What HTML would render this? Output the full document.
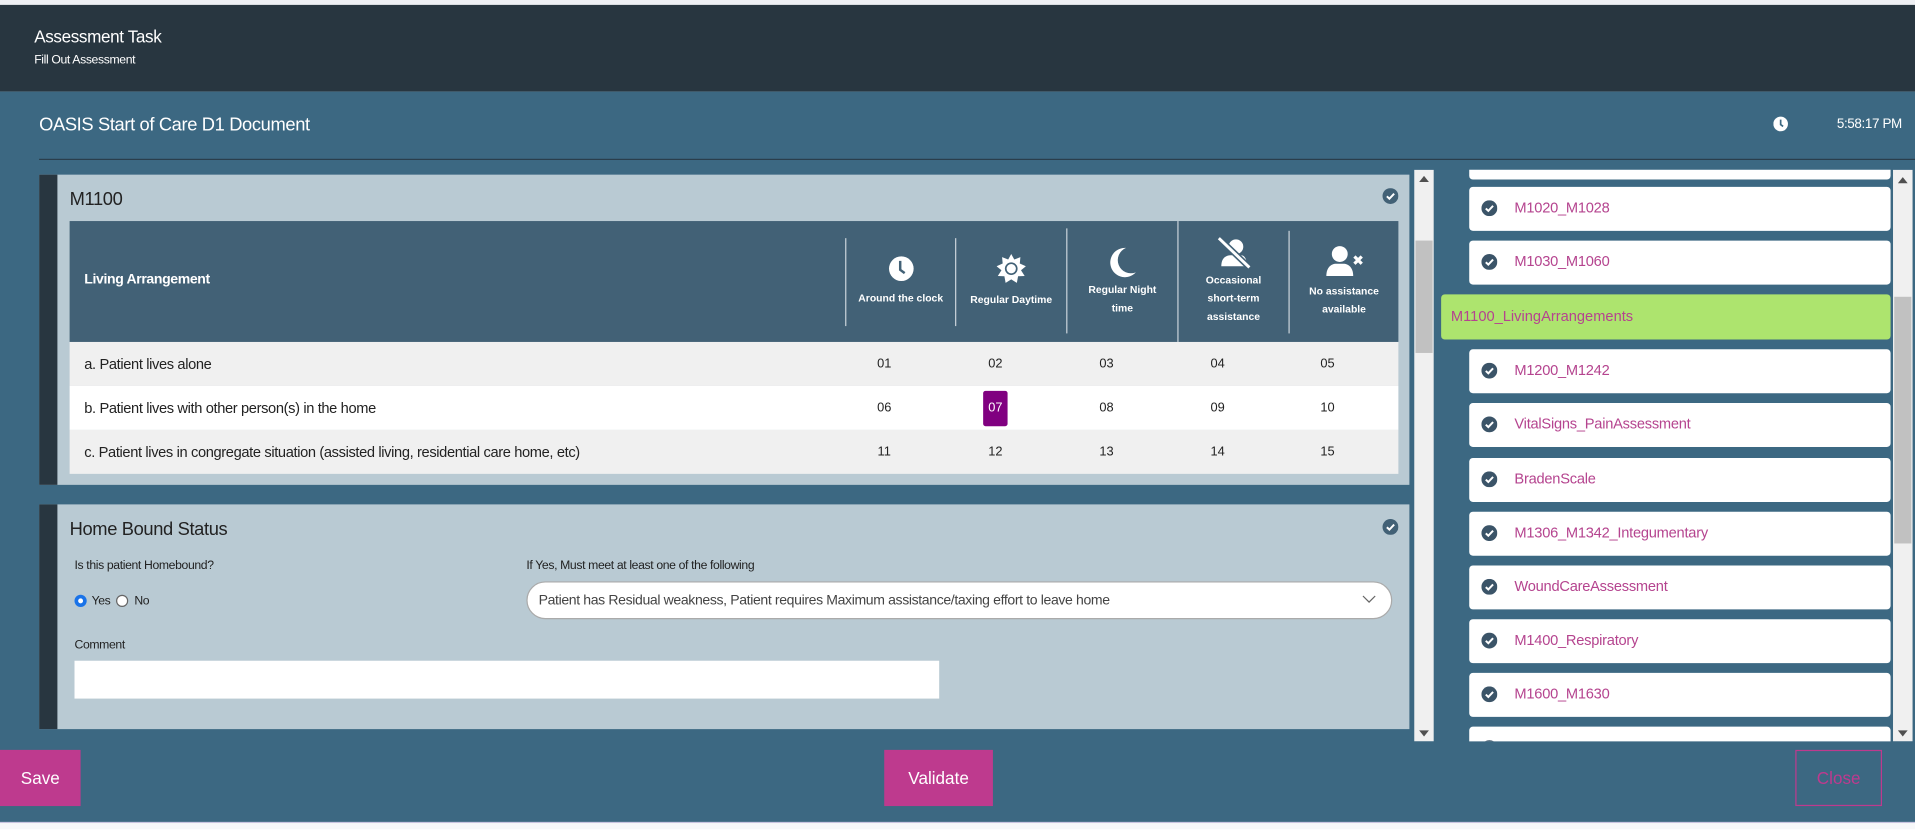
<!DOCTYPE html>
<html><head><meta charset="utf-8"><style>
*{box-sizing:border-box;margin:0;padding:0}
html,body{width:1915px;height:830px;overflow:hidden;background:#fff;font-family:"Liberation Sans",sans-serif}
#w{position:absolute;left:0;top:0;width:1568px;height:679px;overflow:hidden;transform:scale(1.22130);transform-origin:0 0}
.a{position:absolute}
.t{position:absolute;white-space:nowrap;letter-spacing:-0.3px}
.hdrcol{position:absolute;top:0;height:99px;color:#fff;font-size:8.5px;font-weight:bold;text-align:center;line-height:15px;display:flex;flex-direction:column;align-items:center;justify-content:center}
.num{position:absolute;font-size:10.5px;color:#222;width:30px;text-align:center;margin-left:-15px}
.card{position:absolute;left:1203px;width:345px;height:36px;background:#fff;border-radius:3px}
.card .ck{position:absolute;left:10px;top:11px}
.card span{position:absolute;left:37px;top:10px;font-size:12px;color:#b5448f;letter-spacing:-0.2px}
.ckb{position:absolute}
</style></head><body><div id="w">
<div class="a" style="left:0;top:0;width:1568px;height:4px;background:#eef0f4"></div>
<div class="a" style="left:0;top:4px;width:1568px;height:71px;background:#283640"></div>
<div class="t" style="left:28px;top:22px;color:#fff;font-size:14px">Assessment Task</div>
<div class="t" style="left:28px;top:44px;color:#fff;font-size:10px">Fill Out Assessment</div>
<div class="a" style="left:0;top:75px;width:1568px;height:598px;background:#3c6882"></div>
<div class="a" style="left:0;top:673px;width:1568px;height:1px;background:#c8c4e0"></div>
<div class="a" style="left:0;top:674px;width:1568px;height:6px;background:#f7f8fa"></div>
<div class="t" style="left:32px;top:94px;color:#fff;font-size:15px">OASIS Start of Care D1 Document</div>
<svg class="a" style="left:1452px;top:95px" width="12" height="13" viewBox="0 0 12 12"><circle cx="6" cy="6" r="6" fill="#fff"/><path d="M6 2.5V6.5L8 8" stroke="#3c6882" stroke-width="1.4" fill="none"/></svg>
<div class="t" style="left:1504px;top:96px;color:#fff;font-size:11px">5:58:17 PM</div>
<div class="a" style="left:32px;top:130px;width:1536px;height:1px;background:#2a3e4c"></div>

<div class="a" style="left:32px;top:139px;width:1142px;height:468px;overflow:hidden">
 <div class="a" style="left:0;top:4px;width:1122px;height:254px;background:#b9cad3"></div>
 <div class="a" style="left:0;top:4px;width:15px;height:254px;background:#283640"></div>
 <div class="t" style="left:25px;top:16px;font-size:15px;color:#222">M1100</div>
 <svg class="ckb" style="left:1100px;top:15px" width="13" height="13" viewBox="0 0 12 12"><circle cx="6" cy="6" r="6" fill="#426176"/><path d="M3.3 6.2L5.2 8 8.8 4.2" stroke="#fff" stroke-width="1.5" fill="none"/></svg>
 <div class="a" style="left:25px;top:42px;width:1088px;height:99px;background:#426176">
  <div class="t" style="left:12px;top:42px;color:#fff;font-size:11.5px;font-weight:bold">Living Arrangement</div>
  <div class="a" style="left:635px;top:14px;width:1px;height:72px;background:#c9d3da"></div>
  <div class="a" style="left:725px;top:14px;width:1px;height:72px;background:#c9d3da"></div>
  <div class="a" style="left:816px;top:6px;width:1px;height:86px;background:#c9d3da"></div>
  <div class="a" style="left:907px;top:0;width:1px;height:99px;background:#c9d3da"></div>
  <div class="a" style="left:998px;top:8px;width:1px;height:84px;background:#c9d3da"></div>
  <div class="hdrcol" style="left:636px;width:89px"><svg width="22" height="22" viewBox="0 0 24 24"><circle cx="12" cy="12" r="11" fill="#fff"/><path d="M11 5V13L15 16" stroke="#426176" stroke-width="2.2" fill="none"/></svg><div style="margin-top:6px">Around the clock</div></div>
  <div class="hdrcol" style="left:726px;width:90px"><svg width="24" height="24" viewBox="0 0 24 24"><g fill="#fff"><path d="M12 0L14.5 4.5 19.5 2.5 19 7.8 24 10 20 13.3 23 18 17.6 18.2 16.6 23.6 12 20.8 7.4 23.6 6.4 18.2 1 18 4 13.3 0 10 5 7.8 4.5 2.5 9.5 4.5Z"/></g><circle cx="12" cy="12" r="5.2" fill="#426176"/><circle cx="12" cy="12" r="3.8" fill="#fff"/></svg><div style="margin-top:6px">Regular Daytime</div></div>
  <div class="hdrcol" style="left:817px;width:90px"><svg width="24" height="26" viewBox="0 0 24 26"><path d="M15 1A12 12 0 1 0 23 21A10 10 0 0 1 15 1Z" fill="#fff"/></svg><div style="margin-top:2px">Regular Night<br>time</div></div>
  <div class="hdrcol" style="left:908px;width:90px"><svg width="28" height="26" viewBox="0 0 28 26"><circle cx="16" cy="8" r="6" fill="#fff"/><path d="M4 24C4 17 8 15 12 15L20 15C23 15 25 18 25 24Z" fill="#fff"/><path d="M2 1L27 25" stroke="#426176" stroke-width="5"/><path d="M2 1L27 25" stroke="#fff" stroke-width="2.4"/></svg><div style="margin-top:2px">Occasional<br>short-term<br>assistance</div></div>
  <div class="hdrcol" style="left:999px;width:89px"><svg width="32" height="26" viewBox="0 0 32 26"><circle cx="12" cy="7" r="6.5" fill="#fff"/><path d="M1 25C1 18 5 15 9 15L15 15C19 15 23 18 23 25Z" fill="#fff"/><path d="M24 9L30 15M30 9L24 15" stroke="#fff" stroke-width="2.6"/></svg><div style="margin-top:4px">No assistance<br>available</div></div>
 </div>
 <div class="a" style="left:25px;top:141px;width:1088px;height:36px;background:#f0f0f0"></div>
 <div class="a" style="left:25px;top:177px;width:1088px;height:36px;background:#fff"></div>
 <div class="a" style="left:25px;top:213px;width:1088px;height:36px;background:#f0f0f0"></div>
 <div class="t" style="left:37px;top:152px;font-size:12px;color:#222">a. Patient lives alone</div>
 <div class="t" style="left:37px;top:188px;font-size:12px;color:#222">b. Patient lives with other person(s) in the home</div>
 <div class="t" style="left:37px;top:224px;font-size:12px;color:#222">c. Patient lives in congregate situation (assisted living, residential care home, etc)</div>
 <div class="a" style="left:773px;top:181px;width:20px;height:29px;background:#800080;border-radius:2px"></div>
 <div class="num" style="left:692px;top:153px">01</div><div class="num" style="left:783px;top:153px">02</div><div class="num" style="left:874px;top:153px">03</div><div class="num" style="left:965px;top:153px">04</div><div class="num" style="left:1055px;top:153px">05</div>
 <div class="num" style="left:692px;top:189px">06</div><div class="num" style="left:783px;top:189px;color:#fff">07</div><div class="num" style="left:874px;top:189px">08</div><div class="num" style="left:965px;top:189px">09</div><div class="num" style="left:1055px;top:189px">10</div>
 <div class="num" style="left:692px;top:225px">11</div><div class="num" style="left:783px;top:225px">12</div><div class="num" style="left:874px;top:225px">13</div><div class="num" style="left:965px;top:225px">14</div><div class="num" style="left:1055px;top:225px">15</div>

 <div class="a" style="left:0;top:274px;width:1122px;height:184px;background:#b9cad3"></div>
 <div class="a" style="left:0;top:274px;width:15px;height:184px;background:#283640"></div>
 <div class="t" style="left:25px;top:286px;font-size:15px;color:#222">Home Bound Status</div>
 <svg class="ckb" style="left:1100px;top:286px" width="13" height="13" viewBox="0 0 12 12"><circle cx="6" cy="6" r="6" fill="#426176"/><path d="M3.3 6.2L5.2 8 8.8 4.2" stroke="#fff" stroke-width="1.5" fill="none"/></svg>
 <div class="t" style="left:29px;top:319px;font-size:10px;color:#222">Is this patient Homebound?</div>
 <div class="a" style="left:29px;top:348px;width:10px;height:10px;border-radius:50%;border:3px solid #1a73e8;background:#fff"></div>
 <div class="t" style="left:43px;top:348px;font-size:10px;color:#222">Yes</div>
 <div class="a" style="left:63px;top:348px;width:10px;height:10px;border-radius:50%;border:1px solid #666;background:#fff"></div>
 <div class="t" style="left:78px;top:348px;font-size:10px;color:#222">No</div>
 <div class="t" style="left:399px;top:319px;font-size:10px;color:#222">If Yes, Must meet at least one of the following</div>
 <div class="a" style="left:399px;top:337px;width:709px;height:31px;background:#fff;border:1px solid #aaa;border-radius:16px"></div>
 <div class="t" style="left:409px;top:347px;font-size:11.5px;color:#444">Patient has Residual weakness, Patient requires Maximum assistance/taxing effort to leave home</div>
 <svg class="a" style="left:1083px;top:348px" width="12" height="8" viewBox="0 0 12 8"><path d="M1 1L6 6 11 1" stroke="#666" fill="none"/></svg>
 <div class="t" style="left:29px;top:384px;font-size:10px;color:#222">Comment</div>
 <div class="a" style="left:29px;top:402px;width:708px;height:31px;background:#fff"></div>
 <div class="a" style="left:1126px;top:0;width:16px;height:468px;background:#f0f0f0"></div>
 <div class="a" style="left:1127px;top:58px;width:14px;height:92px;background:#c1c1c1"></div>
 <div class="a" style="left:1130px;top:5px;width:0;height:0;border-left:4px solid transparent;border-right:4px solid transparent;border-bottom:5px solid #505050"></div>
 <div class="a" style="left:1130px;top:459px;width:0;height:0;border-left:4px solid transparent;border-right:4px solid transparent;border-top:5px solid #505050"></div>
</div>

<div class="a" style="left:0;top:139px;width:1568px;height:468px;overflow:hidden;pointer-events:none">
 <div style="position:absolute;left:0;top:-139px;width:1568px;height:800px">
 <div class="card" style="top:111px"></div>
 <div class="card" style="top:153px"><svg class="ck" width="13" height="13" viewBox="0 0 12 12"><circle cx="6" cy="6" r="6" fill="#3b5468"/><path d="M3.3 6.2L5.2 8 8.8 4.2" stroke="#fff" stroke-width="1.5" fill="none"/></svg><span>M1020_M1028</span></div>
 <div class="card" style="top:197px"><svg class="ck" width="13" height="13" viewBox="0 0 12 12"><circle cx="6" cy="6" r="6" fill="#3b5468"/><path d="M3.3 6.2L5.2 8 8.8 4.2" stroke="#fff" stroke-width="1.5" fill="none"/></svg><span>M1030_M1060</span></div>
 <div class="a" style="left:1180px;top:241px;width:368px;height:37px;background:#ade46e;border-radius:3px"><span style="position:absolute;left:8px;top:11px;font-size:12px;color:#b5448f">M1100_LivingArrangements</span></div>
 <div class="card" style="top:286px"><svg class="ck" width="13" height="13" viewBox="0 0 12 12"><circle cx="6" cy="6" r="6" fill="#3b5468"/><path d="M3.3 6.2L5.2 8 8.8 4.2" stroke="#fff" stroke-width="1.5" fill="none"/></svg><span>M1200_M1242</span></div>
 <div class="card" style="top:330px"><svg class="ck" width="13" height="13" viewBox="0 0 12 12"><circle cx="6" cy="6" r="6" fill="#3b5468"/><path d="M3.3 6.2L5.2 8 8.8 4.2" stroke="#fff" stroke-width="1.5" fill="none"/></svg><span>VitalSigns_PainAssessment</span></div>
 <div class="card" style="top:375px"><svg class="ck" width="13" height="13" viewBox="0 0 12 12"><circle cx="6" cy="6" r="6" fill="#3b5468"/><path d="M3.3 6.2L5.2 8 8.8 4.2" stroke="#fff" stroke-width="1.5" fill="none"/></svg><span>BradenScale</span></div>
 <div class="card" style="top:419px"><svg class="ck" width="13" height="13" viewBox="0 0 12 12"><circle cx="6" cy="6" r="6" fill="#3b5468"/><path d="M3.3 6.2L5.2 8 8.8 4.2" stroke="#fff" stroke-width="1.5" fill="none"/></svg><span>M1306_M1342_Integumentary</span></div>
 <div class="card" style="top:463px"><svg class="ck" width="13" height="13" viewBox="0 0 12 12"><circle cx="6" cy="6" r="6" fill="#3b5468"/><path d="M3.3 6.2L5.2 8 8.8 4.2" stroke="#fff" stroke-width="1.5" fill="none"/></svg><span>WoundCareAssessment</span></div>
 <div class="card" style="top:507px"><svg class="ck" width="13" height="13" viewBox="0 0 12 12"><circle cx="6" cy="6" r="6" fill="#3b5468"/><path d="M3.3 6.2L5.2 8 8.8 4.2" stroke="#fff" stroke-width="1.5" fill="none"/></svg><span>M1400_Respiratory</span></div>
 <div class="card" style="top:551px"><svg class="ck" width="13" height="13" viewBox="0 0 12 12"><circle cx="6" cy="6" r="6" fill="#3b5468"/><path d="M3.3 6.2L5.2 8 8.8 4.2" stroke="#fff" stroke-width="1.5" fill="none"/></svg><span>M1600_M1630</span></div>
 <div class="card" style="top:595px"><svg class="ck" width="13" height="13" viewBox="0 0 12 12"><circle cx="6" cy="6" r="6" fill="#3b5468"/></svg><span>M1700_M1745</span></div>
 <div class="a" style="left:1550px;top:139px;width:16px;height:468px;background:#f0f0f0"></div>
 <div class="a" style="left:1551px;top:243px;width:14px;height:202px;background:#c1c1c1"></div>
 <div class="a" style="left:1554px;top:145px;width:0;height:0;border-left:4px solid transparent;border-right:4px solid transparent;border-bottom:5px solid #505050"></div>
 <div class="a" style="left:1554px;top:598px;width:0;height:0;border-left:4px solid transparent;border-right:4px solid transparent;border-top:5px solid #505050"></div>
 </div>
</div>

<div class="a" style="left:0;top:614px;width:66px;height:46px;background:#be3a8e;color:#fff;font-size:14px;line-height:46px;text-align:center">Save</div>
<div class="a" style="left:724px;top:614px;width:89px;height:46px;background:#be3a8e;color:#fff;font-size:14px;line-height:46px;text-align:center">Validate</div>
<div class="a" style="left:1470px;top:614px;width:71px;height:46px;border:1px solid #be3a8e;color:#be3a8e;font-size:14px;line-height:44px;text-align:center">Close</div>
</div></body></html>
